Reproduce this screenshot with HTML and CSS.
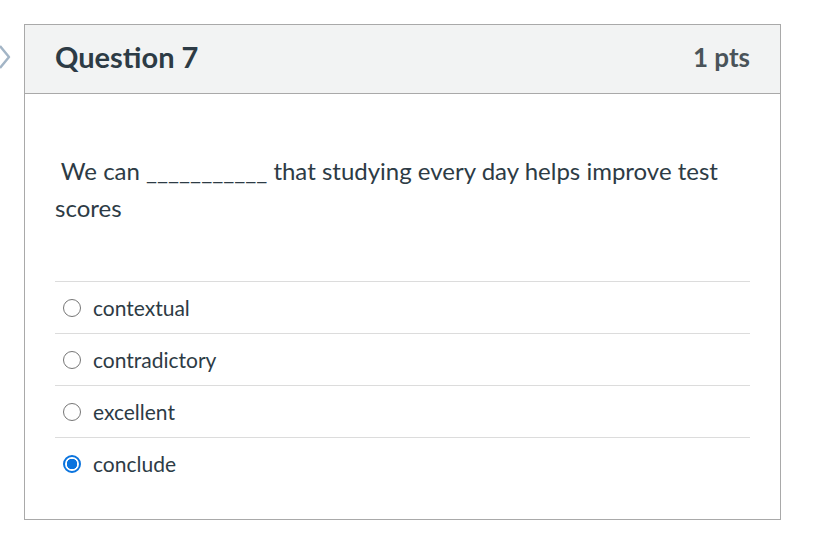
FILE: index.html
```html
<!DOCTYPE html>
<html lang="en">
<head>
<meta charset="utf-8">
<title>Question 7</title>
<link rel="stylesheet" href="styles.css">
</head>
<body>
<div class="page">
  <svg class="nav-chevron" width="14" height="26" viewBox="0 0 14 26" aria-hidden="true">
    <polyline points="1,2 10,13 1,24" fill="none" stroke="#a3b5c6" stroke-width="2.4" stroke-linejoin="round"/>
  </svg>
  <div class="question">
    <div class="q-header">
      <h2 class="q-title">Question 7</h2>
      <span class="q-pts">1 pts</span>
    </div>
    <div class="q-body">
      <p class="q-text">&nbsp;We can ___________ that studying every day helps improve test scores</p>
      <div class="answers">
        <label class="answer"><span class="radio"></span><span class="answer-label">contextual</span></label>
        <label class="answer"><span class="radio"></span><span class="answer-label">contradictory</span></label>
        <label class="answer"><span class="radio"></span><span class="answer-label">excellent</span></label>
        <label class="answer"><span class="radio checked"></span><span class="answer-label">conclude</span></label>
      </div>
    </div>
  </div>
</div>
</body>
</html>
```
FILE: styles.css
```css
html, body {
  margin: 0;
  padding: 0;
  background: #ffffff;
}
body {
  font-family: Lato, "Open Sans", "Liberation Sans", sans-serif;
  color: #2d3b45;
}
.page {
  position: relative;
  padding: 24px 0 0 24px;
}
.nav-chevron {
  position: absolute;
  left: -1px;
  top: 44px;
}
.question {
  width: 757px;
  box-sizing: border-box;
  border: 1px solid #a9a9a9;
  background: #fff;
}
.q-header {
  height: 69px;
  box-sizing: border-box;
  border-bottom: 1px solid #a9a9a9;
  background: #f2f3f3;
  display: flex;
  align-items: center;
  justify-content: space-between;
  padding: 0 30px 5px 30px;
}
.q-title {
  margin: 0;
  font-size: 29px;
  font-weight: 700;
  color: #2d3b45;
}
.q-pts {
  font-size: 26px;
  font-weight: 700;
  color: #4a5359;
}
.q-body {
  padding: 58px 30px 30px 30px;
}
.q-text {
  margin: 0 0 55px 0;
  font-size: 24px;
  line-height: 37px;
  color: #2d3b45;
}
.answer {
  display: flex;
  align-items: center;
  height: 52px;
  box-sizing: border-box;
  border-top: 1px solid #dcdcdc;
}
.radio {
  width: 18px;
  height: 18px;
  box-sizing: border-box;
  border: 1.5px solid #767676;
  border-radius: 50%;
  margin-left: 8px;
  margin-right: 12px;
  flex: none;
}
.radio.checked {
  border: 2px solid #0b74de;
  background: radial-gradient(circle, #0b74de 0 5px, #fff 5.5px);
}
.answer-label {
  font-size: 21px;
  color: #2d3b45;
}
```
